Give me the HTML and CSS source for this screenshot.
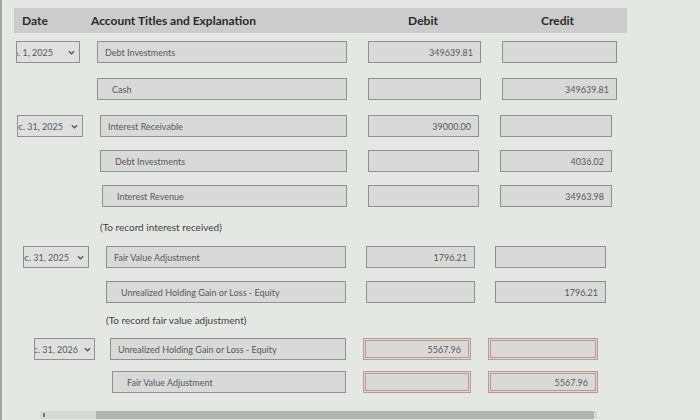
FILE: index.html
```html
<!DOCTYPE html>
<html lang="en">
<head>
    <meta charset="UTF-8">
    <title>Journal Entries</title>
    <link rel="stylesheet" href="styles.css">
</head>
<body>
    <div class="page">
        <div class="head">
            <span class="h-date">Date</span>
            <span class="h-acct">Account Titles and Explanation</span>
            <span class="h-debit">Debit</span>
            <span class="h-credit">Credit</span>
        </div>

        <div class="entries">
            <div class="row g1">
                <div class="pick d1"><span>Jan. 1, 2025</span><svg viewBox="0 0 8 5"><path d="M1 1 L4 4 L7 1"/></svg></div>
                <div class="acct">Debt Investments</div>
                <div class="amt">349639.81</div>
                <div class="amt"></div>
            </div>
            <div class="row g1">
                <div></div>
                <div class="acct indent">Cash</div>
                <div class="amt"></div>
                <div class="amt">349639.81</div>
            </div>

            <div class="row g2">
                <div class="pick d2"><span>Dec. 31, 2025</span><svg viewBox="0 0 8 5"><path d="M1 1 L4 4 L7 1"/></svg></div>
                <div class="acct">Interest Receivable</div>
                <div class="amt">39000.00</div>
                <div class="amt"></div>
            </div>
            <div class="row g2 tight">
                <div></div>
                <div class="acct indent">Debt Investments</div>
                <div class="amt"></div>
                <div class="amt">4036.02</div>
            </div>
            <div class="row g2 tight">
                <div></div>
                <div class="acct indent shift">Interest Revenue</div>
                <div class="amt"></div>
                <div class="amt">34963.98</div>
            </div>
            <div class="row g2 note-row">
                <div></div>
                <div class="note">(To record interest received)</div>
            </div>

            <div class="row g3">
                <div class="pick d3"><span>Dec. 31, 2025</span><svg viewBox="0 0 8 5"><path d="M1 1 L4 4 L7 1"/></svg></div>
                <div class="acct">Fair Value Adjustment</div>
                <div class="amt">1796.21</div>
                <div class="amt"></div>
            </div>
            <div class="row g3 tight">
                <div></div>
                <div class="acct indent">Unrealized Holding Gain or Loss - Equity</div>
                <div class="amt"></div>
                <div class="amt">1796.21</div>
            </div>
            <div class="row g3 note-row second">
                <div></div>
                <div class="note">(To record fair value adjustment)</div>
            </div>

            <div class="row g4">
                <div class="pick d4"><span>Dec. 31, 2026</span><svg viewBox="0 0 8 5"><path d="M1 1 L4 4 L7 1"/></svg></div>
                <div class="acct">Unrealized Holding Gain or Loss - Equity</div>
                <div class="amt wrong">5567.96</div>
                <div class="amt wrong"></div>
            </div>
            <div class="row g4 tighter">
                <div></div>
                <div class="acct indent shift">Fair Value Adjustment</div>
                <div class="amt wrong"></div>
                <div class="amt wrong">5567.96</div>
            </div>
        </div>

        <div class="scrollbar">
            <span class="arrow"></span>
            <div class="thumb"></div>
        </div>
    </div>
</body>
</html>
```

FILE: styles.css
```css
* {
    margin: 0;
    padding: 0;
    box-sizing: border-box;
}
body {
    background: #e5e7e4;
    font-family: Lato, "Open Sans", sans-serif;
    color: #4a4a4a;
}
.page {
    width: 700px;
    height: 420px;
    border-left: 2px solid #a4a4a4;
    padding-top: 8px;
    overflow: hidden;
}
.head {
    display: grid;
    grid-template-columns: 77px 272px 120px 1fr;
    align-items: center;
    height: 25px;
    width: 613px;
    margin-left: 12px;
    background: #cbcccb;
    font-size: 12px;
    font-weight: bold;
    color: #2a2a2a;
}
.h-date {
    padding-left: 8px;
}
.h-debit, .h-credit {
    text-align: center;
}
.h-credit {
    padding-left: 5px;
}
.entries {
    display: flex;
    flex-direction: column;
    margin-top: 8px;
}
.row {
    display: grid;
    align-items: center;
    height: 22px;
    margin-bottom: 15px;
}
.row:last-child {
    margin-bottom: 0;
}
.row.tight {
    margin-top: -2px;
}
.row.tighter {
    margin-top: -4px;
}
.g1 {
    grid-template-columns: 74px 250px 113px 115px;
    column-gap: 21px;
}
.g2 {
    grid-template-columns: 77px 247px 111px 112px;
    column-gap: 21px;
}
.g3 {
    grid-template-columns: 84px 240px 109px 111px;
    column-gap: 20px;
}
.g4 {
    grid-template-columns: 91px 236px 108px 110px;
    column-gap: 17px;
}
.acct, .amt, .pick {
    height: 22px;
    display: flex;
    align-items: center;
    background: #d8d9d8;
    border: 1px solid #8f918f;
    font-size: 9px;
    color: #5a5a5a;
}
.acct {
    padding-left: 7px;
}
.acct.indent {
    padding-left: 14px;
}
.acct.shift {
    margin-left: 2px;
}
.amt {
    justify-content: flex-end;
    padding-right: 7px;
}
.amt.wrong {
    border: 3px double #b89a9a;
    background: #dbd8d8;
}
.pick {
    justify-content: flex-end;
    overflow: hidden;
    white-space: nowrap;
    padding-right: 4px;
    gap: 8px;
    background: #dedfde;
}
.pick svg {
    width: 7px;
    height: 5px;
    flex: none;
    fill: none;
    stroke: #555;
    stroke-width: 1.5;
}
.d1 {
    margin-left: 14px;
    width: 64px;
    gap: 15px;
}
.d2 {
    margin-left: 15px;
    width: 66px;
}
.d3 {
    margin-left: 21px;
    width: 66px;
}
.d4 {
    margin-left: 32px;
    width: 61px;
    padding-right: 3px;
    gap: 6px;
}
.note-row {
    margin-top: -4px;
    margin-bottom: 10px;
    height: 18px;
}
.note-row.second {
    margin-top: -7px;
    margin-bottom: 9px;
}
.note {
    font-size: 10px;
    color: #3f3f3f;
}
.scrollbar {
    display: flex;
    align-items: center;
    width: 557px;
    height: 8px;
    margin: 18px 0 0 38px;
    background: #d7d8d7;
}
.arrow {
    width: 2px;
    height: 4px;
    margin-left: 3px;
    background: #777;
}
.thumb {
    width: 498px;
    height: 8px;
    margin-left: 51px;
    background: #b3b4b3;
}
```
